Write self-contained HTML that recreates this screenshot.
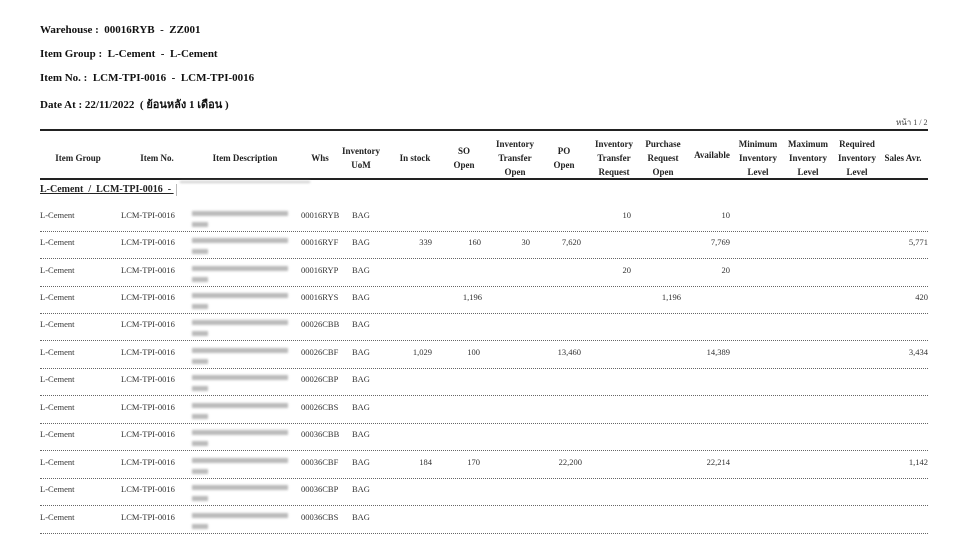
<!DOCTYPE html>
<html><head><meta charset="utf-8">
<style>
*{margin:0;padding:0;box-sizing:border-box}
body{width:960px;height:540px;background:#fff;position:relative;overflow:hidden;font-family:"Liberation Serif","Noto Serif CJK SC",serif;color:#222}
.a{position:absolute;white-space:nowrap}
.t{font-weight:bold;font-size:11px;color:#111}
.h{position:absolute;font-weight:bold;font-size:9px;text-align:center;line-height:14px;color:#222;transform:translateX(-50%)}
.r{position:absolute;font-size:8.5px;color:#333}
.n{position:absolute;font-size:8.5px;color:#333;width:60px;text-align:right}
.d{position:absolute;left:40px;width:888px;border-top:1px dotted #666;height:0}
.b{position:absolute;height:5px;background:#aaa;filter:blur(1px);opacity:.8}
</style></head><body>
<div class="a t" style="left:40px;top:24px">Warehouse :&nbsp; 00016RYB&nbsp; -&nbsp; ZZ001</div>
<div class="a t" style="left:40px;top:48px">Item Group :&nbsp; L-Cement&nbsp; -&nbsp; L-Cement</div>
<div class="a t" style="left:40px;top:72px">Item No. :&nbsp; LCM-TPI-0016&nbsp; -&nbsp; LCM-TPI-0016</div>
<div class="a t" style="left:40px;top:95px">Date At : 22/11/2022&nbsp; ( ย้อนหลัง 1 เดือน )</div>
<div class="a" style="left:896px;top:116px;font-size:8px;color:#444">หน้า 1 / 2</div>
<div class="a" style="left:40px;top:129px;width:888px;height:2px;background:#222"></div>
<div class="a" style="left:40px;top:178px;width:888px;height:2px;background:#222"></div>

<div class="h" style="left:78px;top:151px">Item Group</div>
<div class="h" style="left:157px;top:151px">Item No.</div>
<div class="h" style="left:245px;top:151px">Item Description</div>
<div class="h" style="left:320px;top:151px">Whs</div>
<div class="h" style="left:361px;top:144px">Inventory<br>UoM</div>
<div class="h" style="left:415px;top:151px">In stock</div>
<div class="h" style="left:464px;top:144px">SO<br>Open</div>
<div class="h" style="left:515px;top:137px">Inventory<br>Transfer<br>Open</div>
<div class="h" style="left:564px;top:144px">PO<br>Open</div>
<div class="h" style="left:614px;top:137px">Inventory<br>Transfer<br>Request</div>
<div class="h" style="left:663px;top:137px">Purchase<br>Request<br>Open</div>
<div class="h" style="left:712px;top:148px">Available</div>
<div class="h" style="left:758px;top:137px">Minimum<br>Inventory<br>Level</div>
<div class="h" style="left:808px;top:137px">Maximum<br>Inventory<br>Level</div>
<div class="h" style="left:857px;top:137px">Required<br>Inventory<br>Level</div>
<div class="h" style="left:903px;top:151px">Sales Avr.</div>

<div class="a" style="left:40px;top:184px;font-size:10px;font-weight:bold;text-decoration:underline">L-Cement&nbsp; /&nbsp; LCM-TPI-0016&nbsp; -&nbsp;</div>
<div class="a" style="left:180px;top:181px;width:130px;height:2px;background:#ccc;filter:blur(1px)"></div>
<div class="a" style="left:176px;top:184px;width:1px;height:12px;background:#bbb"></div>

<div class="r" style="left:40px;top:210px">L-Cement</div><div class="r" style="left:121px;top:210px">LCM-TPI-0016</div><div class="b" style="left:192px;top:211px;width:96px"></div><div class="b" style="left:192px;top:222px;width:16px"></div><div class="r" style="left:301px;top:210px">00016RYB</div><div class="r" style="left:352px;top:210px">BAG</div>
<div class="n" style="left:571px;top:210px">10</div><div class="n" style="left:670px;top:210px">10</div>
<div class="d" style="top:231px"></div>

<div class="r" style="left:40px;top:237px">L-Cement</div><div class="r" style="left:121px;top:237px">LCM-TPI-0016</div><div class="b" style="left:192px;top:238px;width:96px"></div><div class="b" style="left:192px;top:249px;width:16px"></div><div class="r" style="left:301px;top:237px">00016RYF</div><div class="r" style="left:352px;top:237px">BAG</div>
<div class="n" style="left:372px;top:237px">339</div><div class="n" style="left:421px;top:237px">160</div><div class="n" style="left:470px;top:237px">30</div><div class="n" style="left:521px;top:237px">7,620</div><div class="n" style="left:670px;top:237px">7,769</div><div class="n" style="left:868px;top:237px">5,771</div>
<div class="d" style="top:258px"></div>

<div class="r" style="left:40px;top:265px">L-Cement</div><div class="r" style="left:121px;top:265px">LCM-TPI-0016</div><div class="b" style="left:192px;top:266px;width:96px"></div><div class="b" style="left:192px;top:277px;width:16px"></div><div class="r" style="left:301px;top:265px">00016RYP</div><div class="r" style="left:352px;top:265px">BAG</div>
<div class="n" style="left:571px;top:265px">20</div><div class="n" style="left:670px;top:265px">20</div>
<div class="d" style="top:286px"></div>

<div class="r" style="left:40px;top:292px">L-Cement</div><div class="r" style="left:121px;top:292px">LCM-TPI-0016</div><div class="b" style="left:192px;top:293px;width:96px"></div><div class="b" style="left:192px;top:304px;width:16px"></div><div class="r" style="left:301px;top:292px">00016RYS</div><div class="r" style="left:352px;top:292px">BAG</div>
<div class="n" style="left:422px;top:292px">1,196</div><div class="n" style="left:621px;top:292px">1,196</div><div class="n" style="left:868px;top:292px">420</div>
<div class="d" style="top:313px"></div>

<div class="r" style="left:40px;top:319px">L-Cement</div><div class="r" style="left:121px;top:319px">LCM-TPI-0016</div><div class="b" style="left:192px;top:320px;width:96px"></div><div class="b" style="left:192px;top:331px;width:16px"></div><div class="r" style="left:301px;top:319px">00026CBB</div><div class="r" style="left:352px;top:319px">BAG</div>
<div class="d" style="top:340px"></div>

<div class="r" style="left:40px;top:347px">L-Cement</div><div class="r" style="left:121px;top:347px">LCM-TPI-0016</div><div class="b" style="left:192px;top:348px;width:96px"></div><div class="b" style="left:192px;top:359px;width:16px"></div><div class="r" style="left:301px;top:347px">00026CBF</div><div class="r" style="left:352px;top:347px">BAG</div>
<div class="n" style="left:372px;top:347px">1,029</div><div class="n" style="left:420px;top:347px">100</div><div class="n" style="left:521px;top:347px">13,460</div><div class="n" style="left:670px;top:347px">14,389</div><div class="n" style="left:868px;top:347px">3,434</div>
<div class="d" style="top:368px"></div>

<div class="r" style="left:40px;top:374px">L-Cement</div><div class="r" style="left:121px;top:374px">LCM-TPI-0016</div><div class="b" style="left:192px;top:375px;width:96px"></div><div class="b" style="left:192px;top:386px;width:16px"></div><div class="r" style="left:301px;top:374px">00026CBP</div><div class="r" style="left:352px;top:374px">BAG</div>
<div class="d" style="top:395px"></div>

<div class="r" style="left:40px;top:402px">L-Cement</div><div class="r" style="left:121px;top:402px">LCM-TPI-0016</div><div class="b" style="left:192px;top:403px;width:96px"></div><div class="b" style="left:192px;top:414px;width:16px"></div><div class="r" style="left:301px;top:402px">00026CBS</div><div class="r" style="left:352px;top:402px">BAG</div>
<div class="d" style="top:423px"></div>

<div class="r" style="left:40px;top:429px">L-Cement</div><div class="r" style="left:121px;top:429px">LCM-TPI-0016</div><div class="b" style="left:192px;top:430px;width:96px"></div><div class="b" style="left:192px;top:441px;width:16px"></div><div class="r" style="left:301px;top:429px">00036CBB</div><div class="r" style="left:352px;top:429px">BAG</div>
<div class="d" style="top:450px"></div>

<div class="r" style="left:40px;top:457px">L-Cement</div><div class="r" style="left:121px;top:457px">LCM-TPI-0016</div><div class="b" style="left:192px;top:458px;width:96px"></div><div class="b" style="left:192px;top:469px;width:16px"></div><div class="r" style="left:301px;top:457px">00036CBF</div><div class="r" style="left:352px;top:457px">BAG</div>
<div class="n" style="left:372px;top:457px">184</div><div class="n" style="left:420px;top:457px">170</div><div class="n" style="left:522px;top:457px">22,200</div><div class="n" style="left:670px;top:457px">22,214</div><div class="n" style="left:868px;top:457px">1,142</div>
<div class="d" style="top:478px"></div>

<div class="r" style="left:40px;top:484px">L-Cement</div><div class="r" style="left:121px;top:484px">LCM-TPI-0016</div><div class="b" style="left:192px;top:485px;width:96px"></div><div class="b" style="left:192px;top:496px;width:16px"></div><div class="r" style="left:301px;top:484px">00036CBP</div><div class="r" style="left:352px;top:484px">BAG</div>
<div class="d" style="top:505px"></div>

<div class="r" style="left:40px;top:512px">L-Cement</div><div class="r" style="left:121px;top:512px">LCM-TPI-0016</div><div class="b" style="left:192px;top:513px;width:96px"></div><div class="b" style="left:192px;top:524px;width:16px"></div><div class="r" style="left:301px;top:512px">00036CBS</div><div class="r" style="left:352px;top:512px">BAG</div>
<div class="d" style="top:533px"></div>
</body></html>
